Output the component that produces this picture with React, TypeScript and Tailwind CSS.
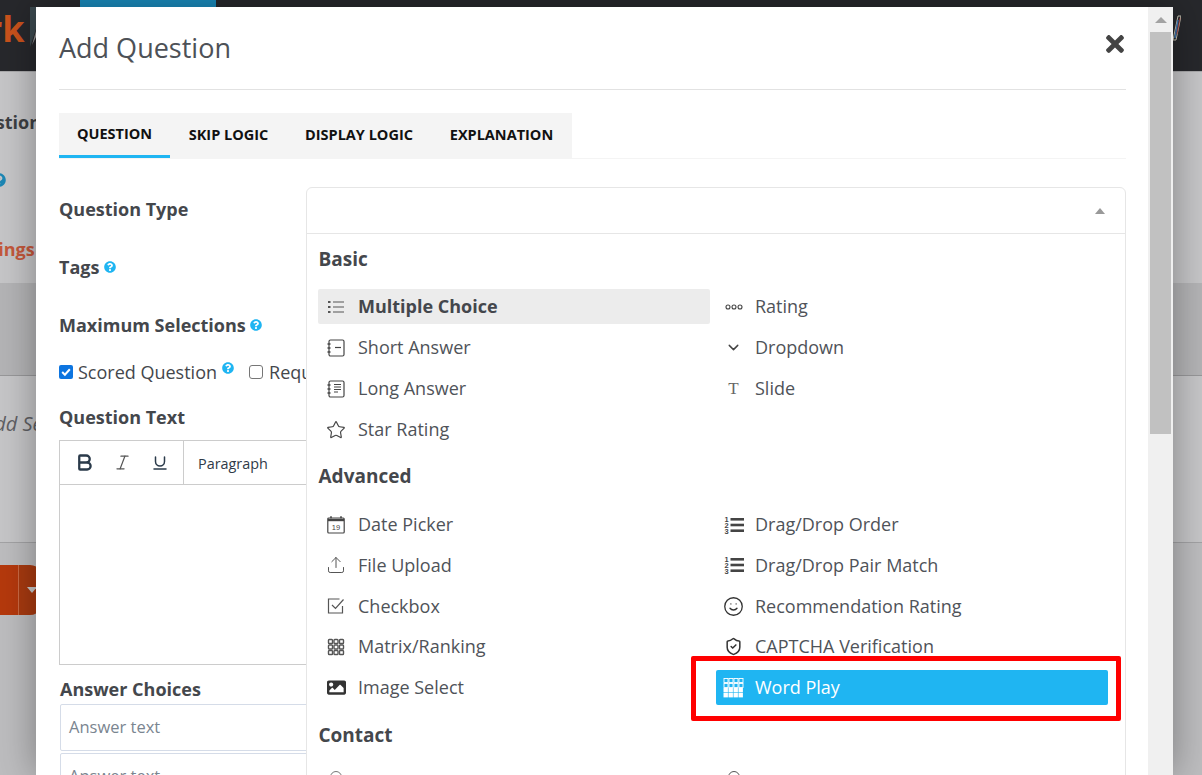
import { ChevronDown, Star, Upload, Smile, ShieldCheck, Bold, Italic, Underline } from 'lucide-react'
import { FaTimes, FaQuestionCircle, FaImage } from 'react-icons/fa'
import type { ReactNode } from 'react'

function ListIcon() {
  return (
    <svg width="18" height="18" viewBox="0 0 18 18" fill="none" stroke="#555" strokeWidth="1.2">
      <path d="M6 4h11M6 9h11M6 14h11" />
      <path d="M1 4h2.5M1 9h2.5M1 14h2.5" strokeWidth="1.8" />
    </svg>
  )
}

function NoteIcon({ long }: { long?: boolean }) {
  return (
    <svg width="18" height="18" viewBox="0 0 18 18" fill="none" stroke="#444" strokeWidth="1.2">
      <rect x="2" y="1" width="15" height="16" rx="1.5" />
      <path d="M0.5 5h3M0.5 9h3M0.5 13h3" strokeWidth="1.3" />
      {long ? <path d="M7 4.5h7M7 7h7M7 9.5h7M7 12h4" /> : <path d="M8 8.5h6" />}
    </svg>
  )
}

function RatingIcon() {
  return (
    <svg width="18" height="18" viewBox="0 0 18 18" fill="none" stroke="#444" strokeWidth="1.1">
      <circle cx="3" cy="9" r="2" />
      <circle cx="9" cy="9" r="2" />
      <circle cx="15" cy="9" r="2" />
    </svg>
  )
}

function CalendarIcon() {
  return (
    <svg width="18" height="18" viewBox="0 0 18 18" fill="none" stroke="#444" strokeWidth="1.2">
      <rect x="0.8" y="2" width="16.4" height="15" rx="1" />
      <path d="M1 4h16" strokeWidth="2.4" />
      <path d="M4 0.3v2M14 0.3v2" strokeWidth="1.6" />
      <text x="9" y="14" fontSize="7.5" fill="#444" stroke="none" textAnchor="middle" fontFamily="Liberation Sans, sans-serif">19</text>
    </svg>
  )
}

function CheckIcon() {
  return (
    <svg width="18" height="18" viewBox="0 0 18 18" fill="none" stroke="#555" strokeWidth="1.2">
      <path d="M15.5 9v7H1.5V2h11" />
      <path d="M5 8l3.5 3.5L16.5 2.5" />
    </svg>
  )
}

function MatrixIcon() {
  const cells = [0, 1, 2]
  return (
    <svg width="18" height="18" viewBox="0 0 18 18" fill="none" stroke="#555" strokeWidth="1.4">
      {cells.map((r) => cells.map((c) => <rect key={`${r}${c}`} x={1.5 + c * 5.5} y={1.5 + r * 5.5} width="4" height="4" rx="0.8" />))}
    </svg>
  )
}

function OrderIcon() {
  return (
    <svg width="20" height="18" viewBox="0 0 20 18" fill="#444">
      <rect x="6.5" y="2" width="13.5" height="2.6" />
      <rect x="6.5" y="7.7" width="13.5" height="2.6" />
      <rect x="6.5" y="13.4" width="13.5" height="2.6" />
      <text x="0.5" y="6" fontSize="7.5" fontWeight="700" fontFamily="Liberation Sans, sans-serif">1</text>
      <text x="0.5" y="12" fontSize="7.5" fontWeight="700" fontFamily="Liberation Sans, sans-serif">2</text>
      <text x="0.5" y="18" fontSize="7.5" fontWeight="700" fontFamily="Liberation Sans, sans-serif">3</text>
    </svg>
  )
}

function WordPlayIcon() {
  const cols = [0, 1, 2, 3]
  const rows = [0, 1, 2, 3]
  return (
    <svg width="21" height="20" viewBox="0 0 20 20" fill="#fff">
      {rows.map((r) =>
        cols.map((c) =>
          r < 2 ? (
            <rect key={`${r}${c}`} x={0.5 + c * 5} y={0.5 + r * 5} width="4" height="4" fill="none" stroke="#fff" strokeWidth="0.9" />
          ) : (
            <rect key={`${r}${c}`} x={c * 5} y={r * 5} width="4.4" height="4.4" />
          ),
        ),
      )}
    </svg>
  )
}

function Help({ className }: { className: string }) {
  return <FaQuestionCircle className={className} />
}

function Item({ icon, label, active, selected }: { icon: ReactNode; label: string; active?: boolean; selected?: boolean }) {
  return (
    <div className={`flex h-[35px] items-center rounded-[2px] even:[&>span:first-child]:w-[35px] ${selected ? 'bg-[#1fb5f2] text-white' : active ? 'bg-[#ececec] font-bold text-[#44474c]' : 'text-[#4f5359]'}`}>
      <span className="flex w-9 shrink-0 justify-center">{icon}</span>
      <span className="ml-1 whitespace-nowrap text-[18px]">{label}</span>
    </div>
  )
}

function Heading({ children, className }: { children: ReactNode; className: string }) {
  return <div className={`ml-[0.5px] h-6 text-[19px] leading-6 font-bold text-[#44474c] ${className}`}>{children}</div>
}

function Backdrop() {
  return (
    <div className="flex h-full flex-col">
      <div className="flex h-[71px] shrink-0 items-start bg-[#27282c]">
        <span className="mt-[5px] -ml-[14px] w-[36px] shrink-0 text-[36px] leading-[48px] font-bold text-[#c9521c]">rk</span>
        <svg width="6" height="40" viewBox="0 0 6 40" className="mt-[7px] ml-[8px] shrink-0">
          <path d="M0 0h6v22L0 40z" fill="#3c4a50" />
          <path d="M6 24v6l-4 8z" fill="#9a9a9a" />
        </svg>
        <div className="ml-[44px] h-[7px] w-[136px] bg-[#1a8bbd]" />
      </div>
      <div className="h-[212px] shrink-0 border-t border-[#a9a9ab] bg-[#c6c6c8] pt-[38px]">
        <div className="-ml-[41px] text-[18px] leading-6 font-bold whitespace-nowrap text-[#3d3f43]">Question</div>
        <div className="mt-[39px] -ml-[8px] text-[14px] text-[#1d87b5]">
          <FaQuestionCircle />
        </div>
        <div className="mt-[50px] -ml-[38px] text-[18px] leading-6 font-bold whitespace-nowrap text-[#c4583c]">Settings</div>
      </div>
      <div className="h-[93px] shrink-0 border-b border-[#98989a] bg-[#b4b4b6]" />
      <div className="h-[167px] shrink-0 border-b border-[#a3a3a5] bg-[#c6c6c8] pt-[36px]">
        <div className="-ml-[17px] text-[20px] leading-6 whitespace-nowrap text-[#5f6064] italic">Add Section</div>
      </div>
      <div className="flex-1 bg-[#bdbdbf] pt-[22px]">
        <div className="flex h-[50px] w-[36px] overflow-hidden">
          <div className="w-[18px] shrink-0 bg-[#b5390d]" />
          <div className="relative w-[24px] shrink-0 rounded-r-xl border-l border-[#c96a45] bg-[#a83a10]">
            <span className="absolute top-[22px] left-[8px] h-0 w-0 border-x-[5px] border-t-[6px] border-x-transparent border-t-[#c9c9c9]" />
          </div>
        </div>
      </div>
    </div>
  )
}

function Dropdown() {
  return (
    <div className="absolute top-[180px] left-[270px] w-[820px] rounded-t-[6px] border border-[#e6e6e6] bg-white">
      <div className="flex h-[46px] items-center justify-end border-b border-[#e6e6e6] pr-[20px]">
        <span className="h-0 w-0 border-x-[5px] border-b-[6px] border-x-transparent border-b-[#999]" />
      </div>
      <div className="px-[11px] pt-[13px]">
        <Heading className="mb-[18px]">Basic</Heading>
        <div className="grid grid-cols-[392px_392px] gap-x-[6px] gap-y-[6px]">
          <Item icon={<ListIcon />} label="Multiple Choice" active />
          <Item icon={<RatingIcon />} label="Rating" />
          <Item icon={<NoteIcon />} label="Short Answer" />
          <Item icon={<ChevronDown size={17} color="#444" />} label="Dropdown" />
          <Item icon={<NoteIcon long />} label="Long Answer" />
          <Item icon={<span className="font-['Liberation_Serif',serif] text-[17px] text-[#666]">T</span>} label="Slide" />
          <Item icon={<Star size={20} color="#444" strokeWidth={1.4} />} label="Star Rating" />
        </div>
        <Heading className="mt-[17.25px] mb-[18.75px]">Advanced</Heading>
        <div className="grid grid-cols-[392px_392px] gap-x-[6px] gap-y-[5.75px]">
          <Item icon={<CalendarIcon />} label="Date Picker" />
          <Item icon={<OrderIcon />} label="Drag/Drop Order" />
          <Item icon={<Upload size={20} color="#555" strokeWidth={1.2} />} label="File Upload" />
          <Item icon={<OrderIcon />} label="Drag/Drop Pair Match" />
          <Item icon={<CheckIcon />} label="Checkbox" />
          <Item icon={<Smile size={21} color="#333" strokeWidth={1.5} />} label="Recommendation Rating" />
          <Item icon={<MatrixIcon />} label="Matrix/Ranking" />
          <Item icon={<ShieldCheck size={19} color="#333" strokeWidth={1.9} />} label="CAPTCHA Verification" />
          <Item icon={<FaImage size={19} color="#333" />} label="Image Select" />
          <Item icon={<WordPlayIcon />} label="Word Play" selected />
        </div>
        <Heading className="mt-[17.75px] mb-[24px]">Contact</Heading>
        <div className="grid grid-cols-[392px_392px] gap-x-[6px]">
          <div className="flex w-9 justify-center">
            <span className="h-3 w-3 rounded-full border border-[#777]" />
          </div>
          <div className="flex w-9 justify-center">
            <span className="h-3 w-3 rounded-full border border-[#555]" />
          </div>
        </div>
      </div>
    </div>
  )
}

function Form() {
  return (
    <div className="text-[#44474c]">
      <div className="flex h-[58px] items-center text-[18px] font-bold">Question Type</div>
      <div className="flex h-[58px] items-center text-[18px] font-bold">
        Tags <Help className="ml-[5px] text-[12px] text-[#1fb5f2]" />
      </div>
      <div className="flex h-[58px] items-center text-[18px] font-bold whitespace-nowrap">
        Maximum Selections <Help className="ml-[4px] text-[12px] text-[#1fb5f2]" />
      </div>
      <div className="flex h-[36px] items-center text-[18px] whitespace-nowrap">
        <span className="flex h-[14px] w-[14px] items-center justify-center rounded-[2px] bg-[#0d75e0] text-white">
          <svg width="12" height="12" viewBox="0 0 11 11" fill="none" stroke="#fff" strokeWidth="1.8">
            <path d="M2 5.5l2.5 2.5L9 3" />
          </svg>
        </span>
        <span className="ml-[5px]">Scored Question</span>
        <Help className="mb-[8px] ml-[5px] text-[12px] text-[#1fb5f2]" />
        <span className="ml-[15px] h-[14px] w-[14px] rounded-[3px] border border-[#767676]" />
        <span className="ml-[6px]">Required</span>
      </div>
      <div className="mt-[15px] mb-[11px] h-6 text-[18px] leading-6 font-bold">Question Text</div>
      <div className="h-[225px] border border-[#ccc]">
        <div className="flex h-[44px] items-center border-b border-[#ccc]">
          <div className="flex h-full w-[124px] items-center border-r border-[#ccc] pl-[14px] text-[#2a3a4a]">
            <Bold size={21} strokeWidth={2.6} />
            <Italic size={19} strokeWidth={1.5} className="ml-[18px] text-[#555]" />
            <Underline size={18} strokeWidth={2} className="ml-[19px]" />
          </div>
          <span className="ml-[14px] pt-[2px] text-[14.4px] text-[#2f3a48]">Paragraph</span>
        </div>
      </div>
      <div className="mt-[12px] mb-[3px] ml-px h-6 text-[18px] leading-6 font-bold">Answer Choices</div>
      <div className="ml-px flex h-[47px] items-center rounded-[2px] border border-[#d5dce8] pb-[1px] pl-[8px] text-[16.5px] text-[#7a8590]">Answer text</div>
      <div className="mt-[2px] ml-px flex h-[47px] items-center rounded-[2px] border border-[#d5dce8] pb-[1px] pl-[8px] text-[16.5px] text-[#7a8590]">Answer text</div>
    </div>
  )
}

function Scrollbar() {
  return (
    <div className="flex w-[25px] shrink-0 flex-col items-center bg-[#f0f0f0]">
      <div className="flex h-[25px] w-full items-center justify-center">
        <span className="h-0 w-0 border-x-[6px] border-b-[6px] border-x-transparent border-b-[#a3a3a3]" />
      </div>
      <div className="h-[402px] w-[21px] bg-[#c1c1c1]" />
    </div>
  )
}

export default function App() {
  return (
    <div className="relative h-[775px] w-[1202px] overflow-hidden bg-[#27282c] font-['Open_Sans',sans-serif]">
      <Backdrop />
      {/* bit of the logo that sticks out right of the modal */}
      <svg width="8" height="28" viewBox="0 0 8 28" className="absolute top-[14px] left-[1173px]">
        <path d="M0 26L5 2h3L3 26z" fill="none" stroke="#c9c4b4" strokeWidth="1" />
        <path d="M2 24L5 6" stroke="#3f78b5" strokeWidth="1.5" />
        <path d="M7 4L4 20" stroke="#a33" strokeWidth="0.8" />
      </svg>
      <div className="absolute top-[7px] bottom-0 left-[36px] flex w-[1137px] overflow-hidden bg-white shadow-[0_0_36px_rgba(0,0,0,0.35)]">
        <div className="relative w-[1112px] overflow-hidden">
          <div className="pr-[22px] pl-[23px]">
            <div className="flex h-[83px] items-center justify-between border-b border-[#e2e2e2] pt-[1px]">
              <h1 className="text-[27px] text-[#4d5157]">Add Question</h1>
              <FaTimes size={26} className="-mr-[2px] mb-[10px] text-[#444]" />
            </div>
            <div className="mt-[23px] border-b border-[#f4f4f4]">
              <div className="flex h-[45px] w-[513px] bg-[#f4f4f4] text-[14.5px] font-bold text-[#111]">
                <div className="flex w-[111px] items-center justify-center border-b-[3px] border-[#1fb5f2]">QUESTION</div>
                <div className="flex w-[117px] items-center justify-center pb-[2px]">SKIP LOGIC</div>
                <div className="flex w-[144px] items-center justify-center pb-[2px]">DISPLAY LOGIC</div>
                <div className="flex w-[141px] items-center justify-center pb-[2px]">EXPLANATION</div>
              </div>
            </div>
            <div className="mt-[21px]">
              <Form />
            </div>
          </div>
          <Dropdown />
        </div>
        <Scrollbar />
      </div>
      <div className="absolute top-[656px] left-[691px] h-[65px] w-[430px] rounded-[2px] border-[5px] border-[#ff0000]" />
    </div>
  )
}
